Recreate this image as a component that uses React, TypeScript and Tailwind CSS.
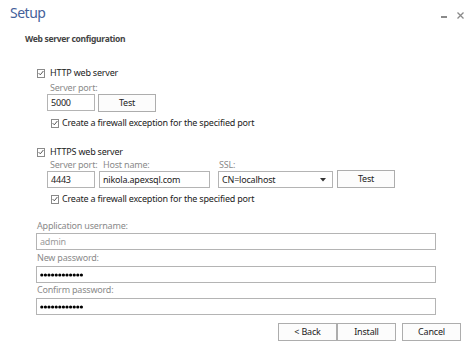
import React from "react";

function Check() {
  return (
    <span className="flex h-[9px] w-[8px] shrink-0 items-center justify-center border border-[#8a8a8a] bg-white">
      <svg width="6" height="6" viewBox="0 0 6 6">
        <path d="M0.6 3.1 L2.3 4.8 L5.4 1" fill="none" stroke="#555" strokeWidth="1" />
      </svg>
    </span>
  );
}

function Input({ w, value, muted }: { w: string; value: string; muted?: boolean }) {
  return (
    <div className={`flex h-[17px] items-center whitespace-nowrap border border-[#b4b4b4] bg-white px-[3px] ${muted ? "text-[#9a9a9a]" : "text-[#222]"} ${w}`}>
      {value}
    </div>
  );
}

function Dots() {
  return (
    <div className="flex h-[17px] w-full items-center border border-[#b4b4b4] bg-white px-[3px]">
      <svg width="44" height="4" viewBox="0 0 44 4">
        {Array.from({ length: 12 }).map((_, i) => (
          <circle key={i} cx={1.8 + i * 3.6} cy={2} r={1.6} fill="#000" />
        ))}
      </svg>
    </div>
  );
}

function Btn({ label, w }: { label: string; w: string }) {
  return (
    <div className={`flex h-[18px] items-center justify-center whitespace-nowrap border border-[#adadad] bg-[#fcfcfc] text-[#222] ${w}`}>
      {label}
    </div>
  );
}

export default function App() {
  return (
    <div
      className="relative flex h-[350px] w-[474px] flex-col overflow-hidden whitespace-nowrap bg-white text-[9px] tracking-[-0.2px] text-[#1c1c1c]"
      style={{ fontFamily: '"Noto Sans", "Open Sans", sans-serif' }}
    >
      <div className="flex h-[26px] items-start justify-between pl-[10px] pr-[10px]">
        <div className="text-[14px] leading-[26px] tracking-[-0.5px] text-[#44619a]">Setup</div>
        <div className="flex items-start pt-[12px]">
          <span className="mt-[4px] h-[2px] w-[6px] bg-[#8a8a8a]" />
          <svg className="ml-[10px]" width="7" height="7" viewBox="0 0 7 7">
            <path d="M0.5 0.5 L6.5 6.5 M6.5 0.5 L0.5 6.5" stroke="#8a8a8a" strokeWidth="1.3" />
          </svg>
        </div>
      </div>
      <div className="ml-[25px] mt-[6px] text-[8.5px] font-bold leading-[14px] tracking-[-0.3px] text-[#444]">
        Web server configuration
      </div>

      <div className="ml-[37px] mt-[21px] flex flex-col">
        <div className="flex h-[12px] items-center gap-[5px]">
          <Check />
          <span>HTTP web server</span>
        </div>
        <div className="ml-[13px] mt-[3px] leading-[12px] text-[#8a8a8a]">Server port:</div>
        <div className="ml-[10px] flex gap-[3px]">
          <Input w="w-[48px]" value="5000" />
          <Btn label="Test" w="w-[58px] h-[17px]" />
        </div>
        <div className="ml-[14px] mt-[5px] flex h-[12px] items-center gap-[3px]">
          <Check />
          <span>Create a firewall exception for the specified port</span>
        </div>

        <div className="mt-[17px] flex h-[12px] items-center gap-[5px]">
          <Check />
          <span>HTTPS web server</span>
        </div>
        <div className="ml-[10px] mt-[1px] flex items-end">
          <div className="flex w-[48px] flex-col">
            <div className="pl-[3px] leading-[12px] text-[#8a8a8a]">Server port:</div>
            <Input w="w-[48px]" value="4443" />
          </div>
          <div className="ml-[4px] flex w-[111px] flex-col">
            <div className="pl-[4px] leading-[12px] text-[#8a8a8a]">Host name:</div>
            <Input w="w-[111px]" value="nikola.apexsql.com" />
          </div>
          <div className="ml-[8px] flex w-[115px] flex-col">
            <div className="pl-[1px] leading-[12px] text-[#8a8a8a]">SSL:</div>
            <div className="flex h-[17px] w-[115px] items-center justify-between border border-[#b4b4b4] bg-white pl-[3px] pr-[6px]">
              <span>CN=localhost</span>
              <svg width="6" height="4" viewBox="0 0 6 4">
                <path d="M0 0 L6 0 L3 3.5 Z" fill="#333" />
              </svg>
            </div>
          </div>
          <Btn label="Test" w="w-[58px] h-[17px] ml-[4px]" />
        </div>
        <div className="ml-[14px] mt-[5px] flex h-[12px] items-center gap-[3px]">
          <Check />
          <span>Create a firewall exception for the specified port</span>
        </div>
      </div>

      <div className="ml-[36px] mr-[38px] mt-[15px] flex flex-col">
        <div className="pl-[1px] leading-[12px] text-[#8a8a8a]">Application username:</div>
        <div className="mt-[1px]">
          <Input w="w-full" value="admin" muted />
        </div>
        <div className="mt-[2px] pl-[1px] leading-[12px] text-[#8a8a8a]">New password:</div>
        <div className="mt-[2px]">
          <Dots />
        </div>
        <div className="mt-[1px] pl-[1px] leading-[12px] text-[#8a8a8a]">Confirm password:</div>
        <div className="mt-[2px]">
          <Dots />
        </div>
      </div>

      <div className="ml-[278px] mt-[8px] flex">
        <Btn label="< Back" w="w-[59px]" />
        <Btn label="Install" w="w-[59px]" />
        <Btn label="Cancel" w="w-[59px] ml-[6px]" />
      </div>
    </div>
  );
}
